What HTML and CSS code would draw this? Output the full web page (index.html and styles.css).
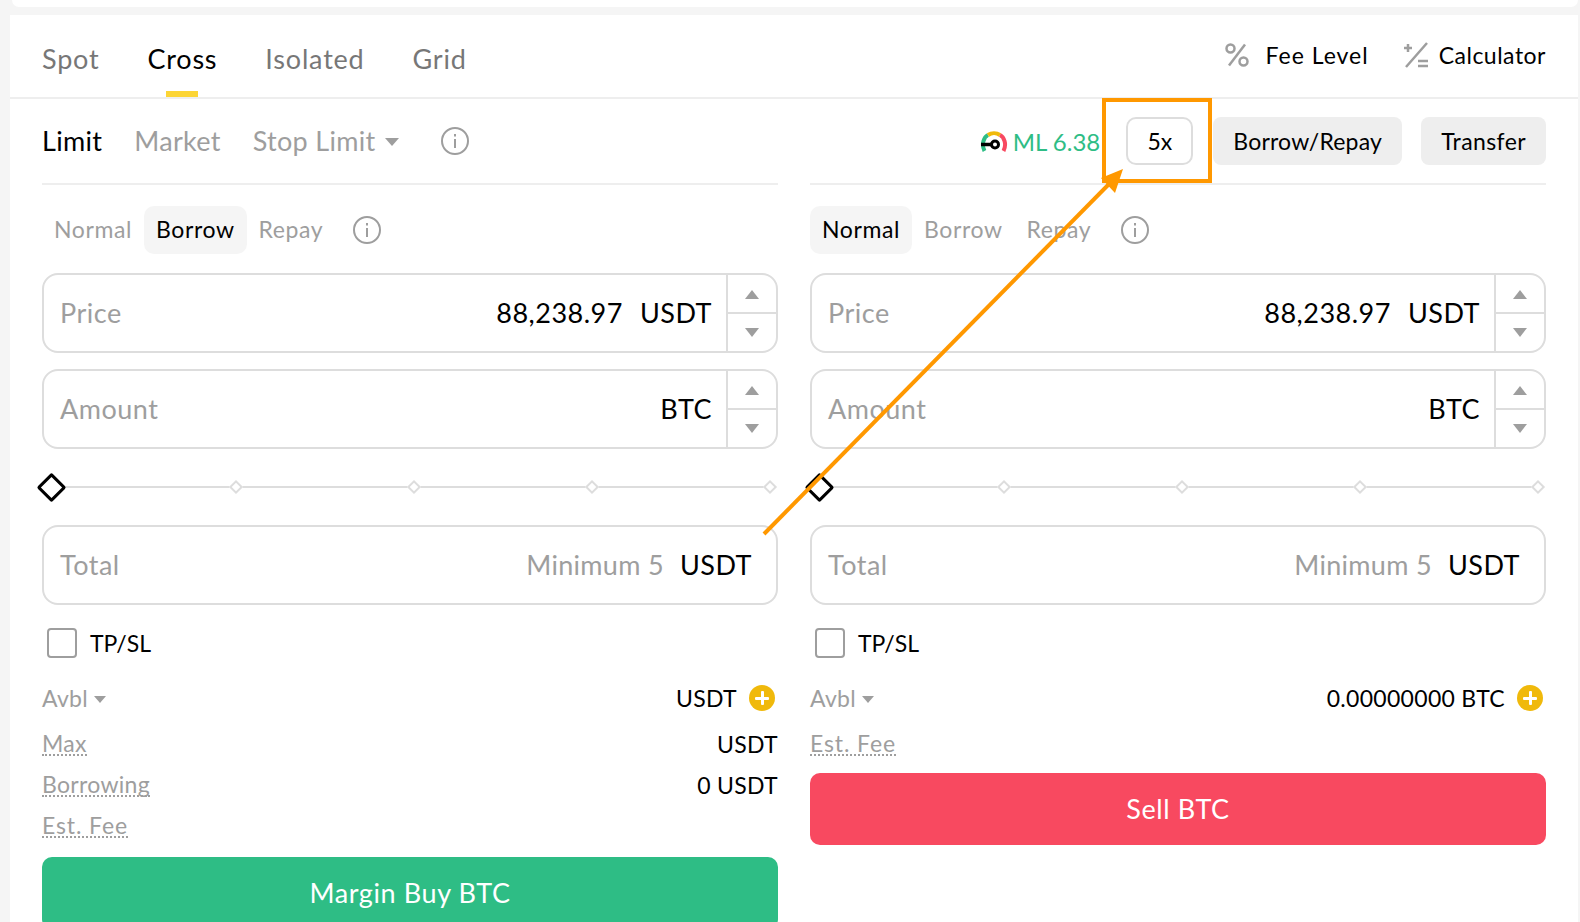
FILE: index.html
```html
<!DOCTYPE html>
<html lang="en">
<head>
  <meta charset="UTF-8" />
  <title>Margin Order Form</title>
  <link rel="stylesheet" href="styles.css">
</head>
<body>
  <div class="top-card"></div>

  <div class="panel">
    <div class="tabs">
      <div class="tab-list">
        <span class="tab">Spot</span>
        <span class="tab active">Cross</span>
        <span class="tab">Isolated</span>
        <span class="tab">Grid</span>
      </div>
      <div class="tools">
        <span class="tool fee">
          <svg class="fee-icon" width="26" height="26" viewBox="0 0 26 26" fill="none" stroke="#9e9e9e" stroke-width="2.500">
            <circle cx="6.500" cy="6.500" r="4"/><circle cx="19.500" cy="19.500" r="4"/><path d="M21 2.500 5 23.500"/>
          </svg>
          Fee Level
        </span>
        <span class="tool">
          <svg width="26" height="26" viewBox="0 0 26 26" fill="none" stroke="#9e9e9e" stroke-width="2.500">
            <path d="M1 6h8M5 2v8M24 1 3 25M15 19h10M15 24h10"/>
          </svg>
          Calculator
        </span>
      </div>
    </div>

    <div class="trade">
      <!-- Buy side -->
      <div class="side">
        <div class="head">
          <span class="type active">Limit</span>
          <span class="type">Market</span>
          <span class="type">Stop Limit <i class="caret"></i></span>
          <svg class="info info-type" width="28" height="28" viewBox="0 0 28 28" fill="none" stroke="#9e9e9e" stroke-width="2">
            <circle cx="14" cy="14" r="13"/><path d="M14 12v9M14 7v2.500"/>
          </svg>
        </div>
        <div class="modes">
          <span class="mode">Normal</span>
          <span class="mode active">Borrow</span>
          <span class="mode">Repay</span>
          <svg class="info" width="28" height="28" viewBox="0 0 28 28" fill="none" stroke="#9e9e9e" stroke-width="2">
            <circle cx="14" cy="14" r="13"/><path d="M14 12v9M14 7v2.500"/>
          </svg>
        </div>
        <div class="field">
          <span class="label">Price</span>
          <span class="value">88,238.97</span>
          <span class="unit">USDT</span>
          <div class="stepper"><span><i class="up"></i></span><span><i class="down"></i></span></div>
        </div>
        <div class="field">
          <span class="label">Amount</span>
          <span class="unit">BTC</span>
          <div class="stepper"><span><i class="up"></i></span><span><i class="down"></i></span></div>
        </div>
        <div class="slider">
          <i class="thumb"></i><i class="tick"></i><i class="tick"></i><i class="tick"></i><i class="tick"></i>
        </div>
        <div class="field total">
          <span class="label">Total</span>
          <span class="hint">Minimum 5</span>
          <span class="unit">USDT</span>
        </div>
        <label class="check"><i class="box"></i>TP/SL</label>
        <div class="row first">
          <span class="key">Avbl <i class="caret small"></i></span>
          <span class="val">USDT <i class="plus"></i></span>
        </div>
        <div class="row"><span class="key dotted">Max</span><span class="val">USDT</span></div>
        <div class="row"><span class="key dotted">Borrowing</span><span class="val">0 USDT</span></div>
        <div class="row"><span class="key dotted wide">Est. Fee</span></div>
        <button class="btn buy">Margin Buy BTC</button>
      </div>

      <!-- Sell side -->
      <div class="side">
        <div class="head right">
          <span class="ml">
            <svg width="28" height="22" viewBox="0 0 28 22" fill="none" stroke-width="4">
              <path d="M4.500 21C1 14 4 7 8 5" stroke="#2ebd85"/>
              <path d="M8 5c3.500-2.500 8.500-2.500 12 0" stroke="#f0b90b"/>
              <path d="M20 5c4 2 7 9 3.500 16" stroke="#f84960"/>
              <path d="M1 14.500h10" stroke="#000" stroke-width="3.500"/>
              <circle cx="15" cy="14.500" r="3.500" stroke="#000" stroke-width="3"/>
            </svg>
            ML 6.38
          </span>
          <button class="leverage">5x</button>
          <button class="plain">Borrow/Repay</button>
          <button class="plain transfer">Transfer</button>
        </div>
        <div class="modes">
          <span class="mode active">Normal</span>
          <span class="mode">Borrow</span>
          <span class="mode">Repay</span>
          <svg class="info" width="28" height="28" viewBox="0 0 28 28" fill="none" stroke="#9e9e9e" stroke-width="2">
            <circle cx="14" cy="14" r="13"/><path d="M14 12v9M14 7v2.500"/>
          </svg>
        </div>
        <div class="field">
          <span class="label">Price</span>
          <span class="value">88,238.97</span>
          <span class="unit">USDT</span>
          <div class="stepper"><span><i class="up"></i></span><span><i class="down"></i></span></div>
        </div>
        <div class="field">
          <span class="label">Amount</span>
          <span class="unit">BTC</span>
          <div class="stepper"><span><i class="up"></i></span><span><i class="down"></i></span></div>
        </div>
        <div class="slider">
          <i class="thumb"></i><i class="tick"></i><i class="tick"></i><i class="tick"></i><i class="tick"></i>
        </div>
        <div class="field total">
          <span class="label">Total</span>
          <span class="hint">Minimum 5</span>
          <span class="unit">USDT</span>
        </div>
        <label class="check"><i class="box"></i>TP/SL</label>
        <div class="row first">
          <span class="key">Avbl <i class="caret small"></i></span>
          <span class="val">0.00000000 BTC <i class="plus"></i></span>
        </div>
        <div class="row"><span class="key dotted wide">Est. Fee</span></div>
        <button class="btn sell">Sell BTC</button>
      </div>
    </div>
  </div>

  <!-- Annotation drawn over the page -->
  <svg class="note" width="1580" height="922" viewBox="0 0 1580 922" fill="none">
    <rect x="1104" y="100" width="106" height="81" stroke="#ff9800" stroke-width="4"/>
    <path d="M764 534 1112 181" stroke="#ff9800" stroke-width="4"/>
    <path d="M1123 169 1101 178 1115 193Z" fill="#ff9800"/>
  </svg>
</body>
</html>
```

FILE: styles.css
```css
/* General Styles */
body {
  margin: 0;
  height: 922px;
  overflow: hidden;
  position: relative;
  background-color: #f5f5f5;
  font-family: 'Lato', sans-serif;
  color: #000;
}

.top-card {
  height: 7px;
  margin: 0 2px 0 12px;
  background: white;
  border-radius: 0 0 12px 12px;
}

.panel {
  margin: 8px 2px 0 10px;
  background: white;
  height: 907px;
}

/* Top tabs */
.tabs {
  display: flex;
  justify-content: space-between;
  align-items: center;
  height: 82px;
  padding: 0 32px;
  border-bottom: 2px solid #eee;
}

.tab-list {
  display: flex;
  gap: 48px;
  margin-top: 5px;
}

.tab {
  position: relative;
  font-size: 27px;
  letter-spacing: 0.8px;
  color: #777;
}

.tab.active {
  color: #000;
}

.tab.active::after {
  content: "";
  position: absolute;
  left: 50%;
  bottom: -22px;
  width: 32px;
  height: 6px;
  margin-left: -16px;
  background: #fcd535;
}

.tools {
  display: flex;
  gap: 34px;
  margin-top: -2px;
}

.tool {
  display: flex;
  align-items: center;
  gap: 10px;
  font-size: 23px;
  letter-spacing: 0.5px;
}

.tool.fee {
  letter-spacing: 1px;
}

.fee-icon {
  margin-right: 5px;
}

/* Order columns */
.trade {
  display: grid;
  grid-template-columns: 736px 736px;
  gap: 32px;
  padding: 0 32px;
}

.head {
  display: flex;
  align-items: center;
  gap: 32px;
  height: 84px;
  border-bottom: 2px solid #eee;
}

.head.right {
  justify-content: flex-end;
  gap: 19px;
}

.type {
  font-size: 27px;
  letter-spacing: 0.3px;
  color: #9e9e9e;
  margin-top: -2px;
}

.type.active {
  color: #000;
}

.head .info {
  margin-top: -1px;
}

.info-type {
  margin-left: 10px;
}

.caret {
  display: inline-block;
  vertical-align: middle;
  margin: 0 0 3px 2px;
  border-left: 7px solid transparent;
  border-right: 7px solid transparent;
  border-top: 8px solid #9e9e9e;
}

.caret.small {
  margin-left: 0;
  border-left-width: 6px;
  border-right-width: 6px;
  border-top-width: 7px;
}

.ml {
  display: flex;
  align-items: center;
  gap: 5px;
  font-size: 24px;
  color: #2ebd85;
  margin-right: 7px;
}

button {
  font-family: inherit;
  color: #000;
  border: none;
}

.leverage {
  width: 67px;
  height: 48px;
  margin-right: 1px;
  font-size: 23px;
  background: white;
  border: 2px solid #ddd;
  border-radius: 10px;
}

.plain {
  height: 48px;
  padding: 0 20px;
  font-size: 23px;
  letter-spacing: 0.2px;
  background: #eee;
  border-radius: 8px;
}

.plain.transfer {
  letter-spacing: 0.4px;
}

/* Normal / Borrow / Repay */
.modes {
  display: flex;
  align-items: center;
  height: 48px;
  margin-top: 21px;
}

.mode {
  display: flex;
  align-items: center;
  height: 46px;
  padding: 0 12px 2px;
  font-size: 23px;
  letter-spacing: 0.6px;
  color: #9e9e9e;
  border-radius: 10px;
}

.mode.active {
  color: #000;
  background: #f5f5f5;
}

.modes .info {
  margin-left: 18px;
}

/* Inputs */
.field {
  display: flex;
  align-items: center;
  height: 80px;
  box-sizing: border-box;
  margin-top: 16px;
  padding-left: 16px;
  border: 2px solid #ddd;
  border-radius: 16px;
  font-size: 27px;
  letter-spacing: 0.5px;
}

.modes + .field {
  margin-top: 19px;
}

.field > span {
  margin-top: -2px;
}

.label {
  flex: 1;
  color: #9e9e9e;
}

.value {
  margin-right: 17px;
}

.unit {
  margin-right: 14px;
}

.hint {
  margin-right: 16px;
  letter-spacing: 0.3px;
  color: #9e9e9e;
}

.stepper {
  display: flex;
  flex-direction: column;
  width: 48px;
  height: 100%;
  border-left: 2px solid #ddd;
}

.stepper span {
  flex: 1;
  display: flex;
  align-items: center;
  justify-content: center;
}

.stepper span + span {
  border-top: 2px solid #ddd;
}

.up, .down {
  border-left: 7px solid transparent;
  border-right: 7px solid transparent;
}

.up {
  margin-top: 2px;
  border-bottom: 9px solid #9e9e9e;
}

.down {
  border-top: 9px solid #9e9e9e;
}

.total {
  margin-top: 24px;
  padding-right: 10px;
}

/* Slider */
.slider {
  position: relative;
  display: flex;
  justify-content: space-between;
  align-items: center;
  height: 28px;
  margin: 24px 1px 0 -4px;
}

.slider::before {
  content: "";
  position: absolute;
  left: 10px;
  right: 4px;
  top: 13px;
  height: 2px;
  background: #ddd;
}

.thumb, .tick {
  position: relative;
  box-sizing: border-box;
  transform: rotate(45deg);
  background: white;
}

.thumb {
  width: 21px;
  height: 21px;
  margin: 0 3px;
  border: 3px solid #000;
  border-radius: 2px;
}

.tick {
  width: 10px;
  height: 10px;
  margin: 0 2px;
  border: 2px solid #ddd;
}

/* TP/SL */
.check {
  display: flex;
  align-items: center;
  gap: 13px;
  height: 30px;
  margin: 23px 0 0 5px;
  font-size: 23px;
}

.box {
  width: 30px;
  height: 30px;
  box-sizing: border-box;
  border: 2px solid #9e9e9e;
  border-radius: 4px;
}

/* Info rows */
.row {
  display: flex;
  justify-content: space-between;
  align-items: center;
  height: 41px;
  font-size: 23px;
  letter-spacing: 0.3px;
}

.row.first {
  height: 51px;
  margin-top: 14px;
}

.key {
  color: #9e9e9e;
}

.key.dotted {
  line-height: 22px;
  border-bottom: 2px dotted #9e9e9e;
}

.key.wide {
  letter-spacing: 0.9px;
}

.val {
  display: flex;
  align-items: center;
  gap: 12px;
}

.plus {
  position: relative;
  width: 26px;
  height: 26px;
  margin-right: 3px;
  border-radius: 50%;
  background: #f0b90b;
}

.plus::before, .plus::after {
  content: "";
  position: absolute;
  background: white;
  border-radius: 1px;
}

.plus::before {
  left: 6px;
  right: 6px;
  top: 12px;
  height: 3px;
}

.plus::after {
  top: 6px;
  bottom: 6px;
  left: 12px;
  width: 3px;
}

/* Submit buttons */
.btn {
  display: block;
  width: 100%;
  height: 72px;
  margin-top: 11px;
  padding-bottom: 3px;
  font-size: 27px;
  letter-spacing: 0.6px;
  color: white;
  border-radius: 10px;
}

.buy {
  background-color: #2ebd85;
}

.sell {
  margin-top: 9px;
  background-color: #f84960;
}

.note {
  position: absolute;
  left: 0;
  top: 0;
}
```
